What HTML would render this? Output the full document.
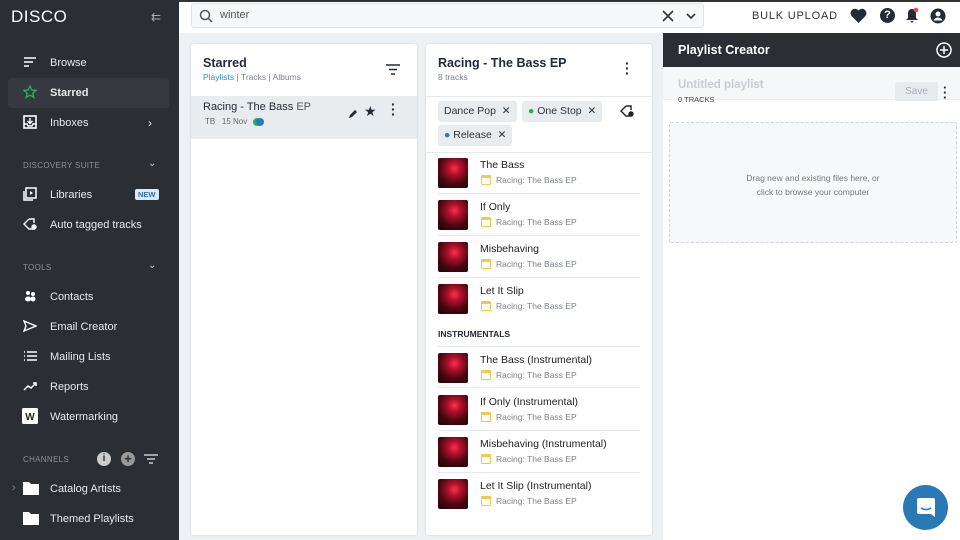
<!DOCTYPE html>
<html><head><meta charset="utf-8"><style>
*{box-sizing:border-box;margin:0;padding:0}
body{width:960px;height:540px;overflow:hidden;font-family:"Liberation Sans",sans-serif;background:#eef1f3;position:relative;color:#222b36}
.sb{position:absolute;left:0;top:0;width:179px;height:540px;background:#2b2e33;color:#e8e9ea}
.sb .logo{position:absolute;left:11px;top:7px;font-size:17px;letter-spacing:.5px;color:#fff}
.item{position:absolute;left:8px;width:161px;height:30px;font-size:11px;line-height:30px;padding-left:42px}
.item svg{position:absolute;left:15px;top:7px}
.sec{position:absolute;left:23px;font-size:8px;color:#8d9096;letter-spacing:.3px}
.chev{position:absolute;left:148px;font-size:10px;color:#c9cacc}
.top{position:absolute;left:179px;top:0;width:781px;height:33px;background:#fff;border-top:2px solid #333}
.search{position:absolute;left:191px;top:3px;width:513px;height:25px;background:#f5f7f8;border:1px solid #dfe3e6;border-radius:3px;font-size:11px;color:#555;line-height:23px;padding-left:28px}
.panel{position:absolute;top:44px;background:#fff;box-shadow:0 0 2px rgba(0,0,0,.15);height:491px;border-radius:3px}
.h{font-size:12.5px;font-weight:bold;color:#222b36}
.sub{font-size:8.5px;color:#7b818a}
.tag{position:absolute;height:21px;background:#e9ecef;border-radius:3px;font-size:10.5px;line-height:21px;padding:0 6px;color:#333}
.row{position:absolute;left:438px;width:202px;height:42px;border-bottom:1px solid #e6e8ea}
.thumb{position:absolute;left:0;top:6px;width:30px;height:30px;background:radial-gradient(circle at 55% 35%,#ff3050 0,#b0102a 25%,#4a0810 60%,#1a0305 100%);border-radius:2px}
.tt{position:absolute;left:42px;top:7px;font-size:10.5px;color:#222}
.ts{position:absolute;left:58px;top:23px;font-size:8.5px;color:#7b818a}
.cal{position:absolute;left:43px;top:23px;width:10px;height:10px;border:1.5px solid #f2c94c;border-top-width:3px;border-radius:1px}
</style></head><body>
<div class="sb">
<div class="logo">DISCO</div>
<div style="position:absolute;left:151px;top:10px;color:#aaa;font-size:12px">⇇</div>
<div class="item" style="top:48px"><svg width="14" height="14"><path d="M1 3h12M1 7h9M1 11h5" stroke="#fff" stroke-width="1.6"/></svg>Browse</div>
<div class="item" style="top:78px;background:#363a40;border-radius:3px;font-weight:bold"><svg width="14" height="14"><path d="M7 1l1.8 4 4.2.4-3.2 2.8 1 4.2L7 10.2 3.2 12.4l1-4.2L1 5.4l4.2-.4z" fill="none" stroke="#27ae60" stroke-width="1.4"/></svg>Starred</div>
<div class="item" style="top:108px"><svg width="14" height="14"><rect x="1" y="1" width="12" height="12" fill="none" stroke="#fff" stroke-width="1.6"/><path d="M7 3v5M4.5 6L7 8.5 9.5 6M1 9h3l1 2h4l1-2h3" stroke="#fff" fill="none" stroke-width="1.4"/></svg>Inboxes<span style="position:absolute;left:140px;font-size:12px">›</span></div>
<div class="sec" style="top:161px">DISCOVERY SUITE</div><div class="chev" style="top:158px">⌄</div>
<div class="item" style="top:180px"><svg width="14" height="14"><rect x="3" y="1" width="10" height="10" fill="none" stroke="#fff" stroke-width="1.5"/><path d="M1 4v9h9" fill="none" stroke="#fff" stroke-width="1.5"/><path d="M7 4l3 2-3 2z" fill="#fff"/></svg>Libraries<span style="position:absolute;left:127px;top:9px;background:#dbe9f7;color:#2f6fb5;font-size:7.5px;font-weight:bold;line-height:11px;padding:0 3px;border-radius:2px">NEW</span></div>
<div class="item" style="top:210px"><svg width="14" height="14"><path d="M6 2h5v4M11 12H6L1 7l5-5" fill="none" stroke="#fff" stroke-width="1.4"/><circle cx="11" cy="10" r="2.7" fill="#fff"/></svg>Auto tagged tracks</div>
<div class="sec" style="top:263px">TOOLS</div><div class="chev" style="top:260px">⌄</div>
<div class="item" style="top:282px"><svg width="14" height="14"><circle cx="5" cy="4" r="2" fill="#fff"/><circle cx="10" cy="5" r="2" fill="#fff"/><ellipse cx="5" cy="10" rx="3" ry="2.5" fill="#fff"/><ellipse cx="10" cy="10" rx="2.5" ry="2.5" fill="#fff"/></svg>Contacts</div>
<div class="item" style="top:312px"><svg width="14" height="14"><path d="M1 2l12 5-12 5 2-5z" fill="none" stroke="#fff" stroke-width="1.4"/></svg>Email Creator</div>
<div class="item" style="top:342px"><svg width="14" height="14"><path d="M4 3h10M4 7h10M4 11h10M1 3h1M1 7h1M1 11h1" stroke="#fff" stroke-width="1.5"/></svg>Mailing Lists</div>
<div class="item" style="top:372px"><svg width="14" height="14"><path d="M1 11l4-4 3 2 5-5M10 4h3v3" fill="none" stroke="#fff" stroke-width="1.5"/></svg>Reports</div>
<div class="item" style="top:402px"><svg width="16" height="16" style="top:6px;left:14px"><rect width="16" height="16" rx="1.5" fill="#fff"/><text x="8" y="12" font-size="10" font-weight="bold" text-anchor="middle" fill="#222" font-family="Liberation Sans">W</text></svg>Watermarking</div>
<div class="sec" style="top:455px">CHANNELS</div>
<div style="position:absolute;left:97px;top:452px;width:14px;height:14px;border-radius:50%;background:#ccc;color:#2b2e33;font-size:10px;font-weight:bold;text-align:center;line-height:14px">i</div>
<div style="position:absolute;left:121px;top:452px;width:14px;height:14px;border-radius:50%;background:#999;color:#2b2e33;font-size:13px;font-weight:bold;text-align:center;line-height:14px">+</div>
<svg style="position:absolute;left:144px;top:453px" width="14" height="12"><path d="M0 2h14M3 6h8M5 10h4" stroke="#ccc" stroke-width="1.6"/></svg>
<div style="position:absolute;left:12px;top:482px;color:#888;font-size:11px">›</div>
<div class="item" style="top:474px"><svg width="16" height="14"><path d="M0 1h6l2 2h8v11H0z" fill="#fff"/></svg>Catalog Artists</div>
<div class="item" style="top:504px"><svg width="16" height="14"><path d="M0 1h6l2 2h8v11H0z" fill="#fff"/></svg>Themed Playlists</div>
</div>
<div class="top"></div>
<div class="search"><svg style="position:absolute;left:7px;top:5px" width="14" height="14"><circle cx="6" cy="6" r="4.5" fill="none" stroke="#555" stroke-width="1.5"/><path d="M9.5 9.5l3.5 3.5" stroke="#555" stroke-width="1.5"/></svg>winter
<svg style="position:absolute;left:470px;top:6px" width="12" height="12"><path d="M1 1l10 10M11 1L1 11" stroke="#333" stroke-width="1.6"/></svg>
<svg style="position:absolute;left:494px;top:9px" width="10" height="7"><path d="M1 1l4 4 4-4" stroke="#333" stroke-width="1.6" fill="none"/></svg></div>
<div style="position:absolute;left:752px;top:10px;font-size:11px;letter-spacing:.8px;color:#333">BULK UPLOAD</div>
<svg style="position:absolute;left:850px;top:8px" width="17" height="15"><path d="M8.5 15L1.5 8A4 4 0 018.5 2.5 4 4 0 0115.5 8z" fill="#222b36"/></svg>
<div style="position:absolute;left:880px;top:8px;width:15px;height:15px;border-radius:50%;background:#222b36;color:#fff;font-size:11px;font-weight:bold;text-align:center;line-height:15px">?</div>
<svg style="position:absolute;left:905px;top:7px" width="15" height="17"><path d="M7 2c-3 0-4 2-4 5v4l-2 2h12l-2-2V7c0-3-1-5-4-5zM5.5 14a1.5 1.5 0 003 0" fill="#222b36"/><circle cx="11" cy="3" r="2.3" fill="#e74c3c"/></svg>
<svg style="position:absolute;left:930px;top:8px" width="16" height="16"><circle cx="8" cy="8" r="7.5" fill="#222b36"/><circle cx="8" cy="6" r="2.5" fill="#fff"/><path d="M3.5 12.5c1-2 2.5-3 4.5-3s3.5 1 4.5 3" fill="#fff"/></svg>

<div class="panel" style="left:191px;width:226px">
<div class="h" style="position:absolute;left:12px;top:12px">Starred</div>
<div class="sub" style="position:absolute;left:12px;top:28px"><span style="color:#2e8bc9">Playlists</span> | Tracks | Albums</div>
<svg style="position:absolute;left:195px;top:20px" width="14" height="12"><path d="M0 1h14M3 5.5h8M5 10h4" stroke="#222b36" stroke-width="1.6"/></svg>
<div style="position:absolute;left:0;top:52px;width:226px;height:43px;background:#e9ecef">
<div style="position:absolute;left:12px;top:5px;font-size:11px">Racing - The Bass <span style="color:#555">EP</span></div>
<div style="position:absolute;left:14px;top:21px;font-size:8px;color:#666">TB &nbsp; 15 Nov</div>
<div style="position:absolute;left:62px;top:22px;width:8px;height:8px;border-radius:50%;background:#27ae60"></div><div style="position:absolute;left:65px;top:22px;width:8px;height:8px;border-radius:50%;background:#2a7ab8"></div>
<svg style="position:absolute;left:157px;top:13px" width="10" height="10"><path d="M1 9l1-3 5-5 2 2-5 5z" fill="#222b36"/></svg>
<div style="position:absolute;left:173px;top:7px;font-size:14px">★</div>
<div style="position:absolute;left:200px;top:6px;font-size:14px;font-weight:bold;line-height:5px">·<br>·<br>·</div>
</div>
</div>

<div class="panel" style="left:426px;width:226px">
<div class="h" style="position:absolute;left:12px;top:12px">Racing - The Bass EP</div>
<div class="sub" style="position:absolute;left:12px;top:28px">8 tracks</div>
<div style="position:absolute;left:199px;top:17px;font-size:14px;font-weight:bold;line-height:5px">·<br>·<br>·</div>
<div style="position:absolute;left:0;top:52px;width:226px;border-top:1px solid #e6e8ea"></div>
<div style="position:absolute;left:0;top:108px;width:226px;border-top:1px solid #e6e8ea"></div>
<div class="tag" style="left:12px;top:57px">Dance Pop &nbsp;✕</div>
<div class="tag" style="left:96px;top:57px"><span style="color:#27ae60">●</span> One Stop &nbsp;✕</div>
<div class="tag" style="left:12px;top:81px"><span style="color:#2a7ab8">●</span> Release &nbsp;✕</div>
<svg style="position:absolute;left:194px;top:60px" width="16" height="14"><path d="M6 2h5v4M11 12H6L1 7l5-5" fill="none" stroke="#222" stroke-width="1.4"/><circle cx="11" cy="10" r="2.7" fill="#222"/></svg>
<div style="position:absolute;left:12px;top:285px;font-size:8.5px;font-weight:bold">INSTRUMENTALS</div>
</div>
<div class="row" style="top:152px"><div class="thumb"></div><div class="tt">The Bass</div><div class="cal"></div><div class="ts">Racing: The Bass EP</div></div>
<div class="row" style="top:194px"><div class="thumb"></div><div class="tt">If Only</div><div class="cal"></div><div class="ts">Racing: The Bass EP</div></div>
<div class="row" style="top:236px"><div class="thumb"></div><div class="tt">Misbehaving</div><div class="cal"></div><div class="ts">Racing: The Bass EP</div></div>
<div class="row" style="top:278px;border:none"><div class="thumb"></div><div class="tt">Let It Slip</div><div class="cal"></div><div class="ts">Racing: The Bass EP</div></div>
<div class="row" style="top:346px;border-top:1px solid #e6e8ea"><div class="thumb"></div><div class="tt">The Bass (Instrumental)</div><div class="cal"></div><div class="ts">Racing: The Bass EP</div></div>
<div class="row" style="top:389px"><div class="thumb"></div><div class="tt">If Only (Instrumental)</div><div class="cal"></div><div class="ts">Racing: The Bass EP</div></div>
<div class="row" style="top:431px"><div class="thumb"></div><div class="tt">Misbehaving (Instrumental)</div><div class="cal"></div><div class="ts">Racing: The Bass EP</div></div>
<div class="row" style="top:473px;border:none"><div class="thumb"></div><div class="tt">Let It Slip (Instrumental)</div><div class="cal"></div><div class="ts">Racing: The Bass EP</div></div>

<div style="position:absolute;left:663px;top:33px;width:297px;height:507px;background:#fff">
<div style="height:34px;background:#2b2e33;color:#fff;font-size:12.5px;font-weight:bold;line-height:34px;padding-left:15px">Playlist Creator
<svg style="position:absolute;left:273px;top:9px" width="16" height="16"><circle cx="8" cy="8" r="7" fill="none" stroke="#fff" stroke-width="1.5"/><path d="M8 4v8M4 8h8" stroke="#fff" stroke-width="1.5"/></svg></div>
<div style="height:33px;background:#f5f7f9;border-bottom:1px solid #eceef0;position:relative">
<div style="position:absolute;left:15px;top:12px;font-size:11.5px;font-weight:bold;color:#c8ccd2">Untitled playlist</div>
<div style="position:absolute;left:15px;top:28px;font-size:7.5px;color:#444">0 TRACKS</div>
<div style="position:absolute;left:232px;top:15px;width:43px;height:19px;background:#e8ebee;border-radius:2px;color:#aab0b8;font-size:10px;text-align:center;line-height:19px">Save</div>
<div style="position:absolute;left:280px;top:18px;font-size:13px;font-weight:bold;line-height:5px">·<br>·<br>·</div>
</div>
</div>
<div style="position:absolute;left:669px;top:122px;width:288px;height:121px;border:1px dashed #cfd4d9;border-radius:2px;background:#f6f8fa;font-size:8.5px;color:#777;text-align:center;padding-top:48px;line-height:14px">Drag new and existing files here, or<br>click to browse your computer</div>
<div style="position:absolute;left:903px;top:485px;width:45px;height:45px;border-radius:50%;background:#2a79b5"><svg style="position:absolute;left:13px;top:12px" width="20" height="21"><path d="M3 1h14a2 2 0 012 2v17l-4-3H3a2 2 0 01-2-2V3a2 2 0 012-2z" fill="#fff"/><path d="M5 11c3 2 7 2 10 0" stroke="#2a79b5" stroke-width="1.5" fill="none"/></svg></div>
</body></html>
